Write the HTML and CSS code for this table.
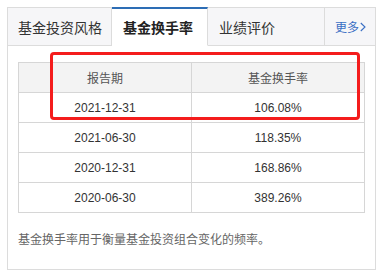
FILE: index.html
```html
<!DOCTYPE html>
<html lang="zh-CN">
<head>
<meta charset="utf-8">
<link rel="stylesheet" href="styles.css">
</head>
<body>
<div class="panel">
  <div class="tabs">
    <div class="tab tab-style">基金投资风格</div>
    <div class="tab tab-active">基金换手率</div>
    <div class="tab tab-eval">业绩评价</div>
    <div class="tab tab-more">更多<svg class="chev" width="6" height="10" viewBox="0 0 6 10"><path d="M0.8 1 L5 5 L0.8 9" fill="none" stroke="#3a6fc4" stroke-width="1.1"/></svg></div>
  </div>
  <div class="body">
    <table class="grid">
      <thead>
        <tr><th>报告期</th><th>基金换手率</th></tr>
      </thead>
      <tbody>
        <tr><td>2021-12-31</td><td>106.08%</td></tr>
        <tr><td>2021-06-30</td><td>118.35%</td></tr>
        <tr><td>2020-12-31</td><td>168.86%</td></tr>
        <tr><td>2020-06-30</td><td>389.26%</td></tr>
      </tbody>
    </table>
    <p class="note">基金换手率用于衡量基金投资组合变化的频率。</p>
    <div class="mark"></div>
  </div>
</div>
</body>
</html>
```
FILE: styles.css
```css
html, body {
  margin: 0;
  padding: 0;
  background: #ffffff;
}
body {
  font-family: "Noto Sans CJK SC", "Liberation Sans", sans-serif;
  color: #333;
}
.panel {
  margin: 7px 0 0 7px;
  width: 369px;
  box-sizing: border-box;
  border-left: 1px solid #dcdcdc;
  border-right: 1px solid #dcdcdc;
  border-bottom: 1px solid #dcdcdc;
}
.tabs {
  display: flex;
  height: 39px;
}
.tab {
  box-sizing: border-box;
  height: 39px;
  display: flex;
  align-items: center;
  padding-left: 10px;
  font-size: 14px;
  color: #333;
  background: #f6f6f8;
  border-top: 1px solid #dcdcdc;
  border-bottom: 1px solid #dcdcdc;
  border-right: 1px solid #dcdcdc;
}
.tab-style { width: 104px; }
.tab-active {
  width: 96px;
  padding-left: 11px;
  background: #ffffff;
  border-top: 2px solid #2d6db5;
  border-bottom: 1px solid #ffffff;
  font-weight: bold;
  color: #222;
}
.tab-eval { width: 117px; padding-left: 11px; }
.tab-more {
  flex: 1;
  border-right: none;
  padding-left: 10px;
  font-size: 12px;
  color: #3a6fc4;
  gap: 1px;
}
.chev { display: block; }
.body {
  position: relative;
  padding: 16px 9px 21px 10px;
}
.grid {
  width: 347px;
  border-collapse: collapse;
  font-family: "Liberation Sans", "Noto Sans CJK SC", sans-serif;
  font-size: 12px;
}
.grid th, .grid td {
  height: 29px;
  padding: 0;
  text-align: center;
  border: 1px solid #d6d6d6;
  width: 50%;
}
.grid th {
  background: #f3f3f3;
  color: #555;
  font-weight: normal;
  font-family: "Noto Sans CJK SC", sans-serif;
}
.grid td { color: #333; }
.note {
  margin: 17px 0 0 0;
  font-size: 12px;
  line-height: 18px;
  color: #666;
}
.mark {
  position: absolute;
  left: 42px;
  top: 6px;
  width: 310px;
  height: 68px;
  box-sizing: border-box;
  border: 3px solid #f41c1c;
  border-radius: 4px;
}
```
